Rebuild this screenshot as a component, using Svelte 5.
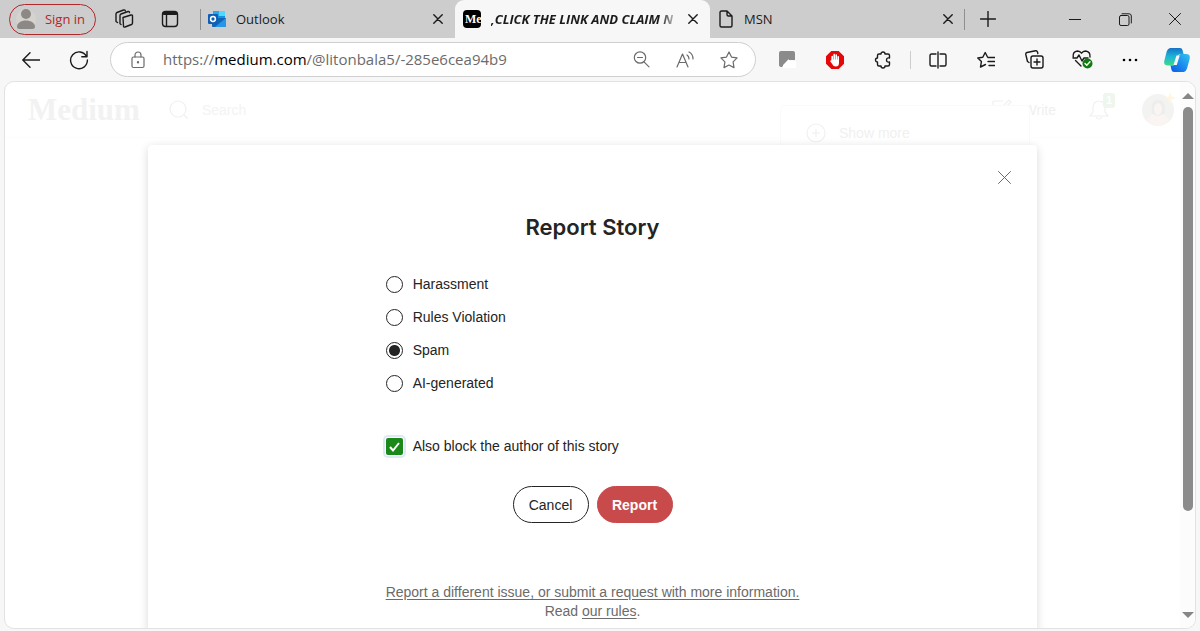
<script>
  let reason = 'Spam';
  let blockAuthor = true;
  let search = '';

  const reasons = ['Harassment', 'Rules Violation', 'Spam', 'AI-generated'];
</script>

<div class="browser">
  <header class="tabs">
    <button class="sign-in">
      <svg width="20" height="20" viewBox="0 0 20 20">
        <circle cx="10" cy="10" r="10" fill="#d6d2ce" />
        <circle cx="10" cy="5" r="5" fill="#8c8885" />
        <path d="M1 18c0-4 4-6.500 9-6.500s9 2.500 9 6.500c0 2-4 3-9 3s-9-1-9-3z" fill="#8c8885" />
      </svg>
      Sign in
    </button>
    <button class="tool" aria-label="Workspaces">
      <svg width="20" height="20" viewBox="0 0 20 20" class="line">
        <path d="M9 8.500l8-2.500q1.500-.4 1.500 1v7q0 1-1 1.500l-6.500 2.500q-1.500.5-1.500-1z" />
        <path d="M7 15.500l-1-.7V6.500q0-1 1-1.500l7-2.500q1.300-.3 1.500 1M3.500 13.500l-1.500-1V5q0-1 1-1.500L9.500 1q1.300-.4 1.800.8" />
      </svg>
    </button>
    <button class="tool" aria-label="Tab actions menu">
      <svg width="18" height="18" viewBox="0 0 18 18" class="line">
        <rect x="1.500" y="1.500" width="15" height="15" rx="3" />
        <path d="M3 3.500h12" stroke-width="3" />
        <path d="M5.500 5v11" />
      </svg>
    </button>

    <div class="tab first">
      <svg width="18" height="18" viewBox="0 0 18 18">
        <rect x="5" y="1" width="12" height="14" rx="1" fill="#1490df" />
        <rect x="11" y="1" width="6" height="5" fill="#50d9ff" />
        <rect x="5" y="1" width="6" height="5" fill="#28a8ea" />
        <path d="M4 8h14v8q0 1-1 1H5q-1 0-1-1z" fill="#1066b5" />
        <path d="M18 8v8q0 1-1 1H7z" fill="#2596e8" />
        <rect y="4" width="10" height="10" rx="1" fill="#0f5fb8" />
        <circle cx="5" cy="9" r="2.400" fill="none" stroke="#fff" stroke-width="1.500" />
      </svg>
      <span class="tab-title">Outlook</span>
      <button class="close" aria-label="Close Outlook tab">
        <svg width="10" height="10" viewBox="0 0 10 10" class="line"><path d="M.8.8l8.400 8.400M9.200.8L.8 9.200" /></svg>
      </button>
    </div>
    <div class="tab active">
      <span class="favicon">Me</span>
      <span class="tab-title promo">,CLICK THE LINK AND CLAIM N</span>
      <button class="close" aria-label="Close Medium tab">
        <svg width="10" height="10" viewBox="0 0 10 10" class="line"><path d="M.8.8l8.400 8.400M9.200.8L.8 9.200" /></svg>
      </button>
    </div>
    <div class="tab">
      <svg width="16" height="18" viewBox="0 0 16 18" class="line">
        <path d="M3.500 1H9l5 5v9.500q0 1.500-1.500 1.500h-9Q2 17 2 15.500v-13Q2 1 3.500 1zM9 1v3.500Q9 6 10.500 6H14" />
      </svg>
      <span class="tab-title">MSN</span>
      <button class="close" aria-label="Close MSN tab">
        <svg width="10" height="10" viewBox="0 0 10 10" class="line"><path d="M.8.8l8.400 8.400M9.200.8L.8 9.200" /></svg>
      </button>
    </div>
    <button class="tool new-tab" aria-label="New tab">
      <svg width="16" height="16" viewBox="0 0 16 16" class="line"><path d="M8 .5v15M.5 8h15" /></svg>
    </button>

    <div class="window-buttons">
      <button aria-label="Minimize">
        <svg width="12" height="12" viewBox="0 0 12 12" class="line thin"><path d="M0 6.500h12" /></svg>
      </button>
      <button aria-label="Restore">
        <svg width="13" height="13" viewBox="0 0 13 13" class="line thin">
          <rect x=".5" y="2.500" width="9.500" height="10" rx="1.500" />
          <path d="M3 .8h7q2.300 0 2.300 2.200v7" />
        </svg>
      </button>
      <button aria-label="Close window">
        <svg width="12" height="12" viewBox="0 0 12 12" class="line thin"><path d="M.5.5l11 11M11.500.5l-11 11" /></svg>
      </button>
    </div>
  </header>

  <nav class="toolbar">
    <button class="tool" aria-label="Back">
      <svg width="18" height="16" viewBox="0 0 18 16" class="line"><path d="M18 8H1M8 .8L.8 8 8 15.200" /></svg>
    </button>
    <button class="tool" aria-label="Refresh">
      <svg width="20" height="20" viewBox="0 0 20 20" class="line"><path d="M17.500 6.500A8.400 8.400 0 1 0 18.400 10M18 1.500v5.200h-5.200" /></svg>
    </button>

    <div class="address">
      <svg class="line grey" width="14" height="18" viewBox="0 0 14 18">
        <rect x="1" y="6" width="12" height="10.500" rx="1.500" />
        <path d="M4 6V4a3 3 0 0 1 6 0v2" />
        <circle cx="7" cy="11.300" r=".6" />
      </svg>
      <div class="url" role="textbox" aria-label="Address" contenteditable="true" tabindex="0">https://<b>medium.com</b>/@litonbala5/-285e6cea94b9</div>
      <button aria-label="Zoom out">
        <svg width="17" height="17" viewBox="0 0 17 17" class="line grey"><circle cx="7" cy="6.500" r="5.700" /><path d="M4.500 6.500h5M11 10.800l5 5" /></svg>
      </button>
      <button aria-label="Read aloud">
        <svg width="18" height="17" viewBox="0 0 18 17" class="line grey"><path d="M1 16L6.500 3 12 16M3 11.500h7M11 4q2 1.300 2 4M13 1q4 2 4 7" /></svg>
      </button>
      <button aria-label="Add to favorites">
        <svg width="18" height="18" viewBox="0 0 18 18" class="line grey"><path d="M9 1l2.500 5.100 5.600.8-4 4 .9 5.700L9 14l-5 2.600.9-5.700-4-4 5.600-.8z" /></svg>
      </button>
    </div>

    <button class="tool" aria-label="Media extension">
      <svg width="17" height="17" viewBox="0 0 17 17">
        <path d="M2 0h12q2 0 2 2v7h-7l-6 7H2q-2 0-2-2V2q0-2 2-2z" fill="#8b8b8b" />
        <path d="M10 8l-2.500 2.500L4 14v3h13v-7h-7z" fill="#fff" />
      </svg>
    </button>
    <button class="tool" aria-label="Ad blocker">
      <svg width="18" height="18" viewBox="0 0 18 18">
        <path d="M5.300 0h7.400L18 5.300v7.400L12.700 18H5.300L0 12.700V5.300z" fill="#e50808" />
        <path d="M6.200 10V5.500M8.200 9V3.500M10.200 9V4M12.200 10V5.800" stroke="#fff" stroke-width="1.600" stroke-linecap="round" />
        <path d="M5.400 8.500H13V12q0 3.500-3.300 3.500-2.500 0-3.500-2.500L4 10q.5-1 1.400-.3z" fill="#fff" />
      </svg>
    </button>
    <button class="tool" aria-label="Extensions">
      <svg width="18" height="18" viewBox="0 0 18 18" class="line">
        <path d="M7 3a2 2 0 0 1 4 0h3q1.500 0 1.500 1.500V7q-3-.5-3 2t3 2v2.500Q15.500 15 14 15h-3a2 2 0 0 1-4 0H5q-1.500 0-1.500-1.500V11a2 2 0 0 1 0-4V4.500Q3.500 3 5 3z" />
      </svg>
    </button>
    <span class="divider"></span>
    <button class="tool" aria-label="Split screen">
      <svg width="18" height="18" viewBox="0 0 18 18" class="line"><path d="M7 3H2.500Q1 3 1 4.500v9Q1 15 2.500 15H7M11 3h4.500Q17 3 17 4.500v9q0 1.500-1.500 1.500H11M9 1v16" /></svg>
    </button>
    <button class="tool" aria-label="Favorites">
      <svg width="18" height="18" viewBox="0 0 18 18" class="line"><path d="M10.500 6L8.200 1.500 5.800 6.300.8 7l3.600 3.600-.9 5.400 5-2.500M11 6.500h7M11 10.500h7M12 14.500h6" /></svg>
    </button>
    <button class="tool" aria-label="Collections">
      <svg width="19" height="19" viewBox="0 0 19 19" class="line">
        <rect x="6" y="6" width="12" height="12" rx="2" />
        <path d="M12 9v6M9 12h6M4 12.500l-1.500-1L.8 4.500Q.5 3 2 2.500l8.500-1.700q1.500-.3 2 1.200l.3 1.500" />
      </svg>
    </button>
    <button class="tool" aria-label="Browser essentials">
      <svg width="21" height="19" viewBox="0 0 21 19" class="line">
        <path d="M1.200 7Q.5 1.500 5.500 1q2.500 0 4 2.200Q11 1 13.500 1q5 .5 4.500 6M1 8h4l2-3 3 6 2-3h4M3.500 10.500L9 16" />
        <circle cx="15.500" cy="13.500" r="5" fill="#107c10" stroke="none" />
        <path d="M13 13.500l1.800 1.800 3.200-3.500" stroke="#fff" />
      </svg>
    </button>
    <button class="tool" aria-label="Settings and more">
      <svg width="16" height="4" viewBox="0 0 16 4"><circle cx="2" cy="2" r="1.300" /><circle cx="8" cy="2" r="1.300" /><circle cx="14" cy="2" r="1.300" /></svg>
    </button>
    <button class="tool copilot" aria-label="Copilot">
      <svg width="26" height="24" viewBox="0 0 26 24">
        <defs>
          <linearGradient id="teal" x1="0" y1="0" x2="0" y2="1"><stop offset="0" stop-color="#1573c8" /><stop offset=".5" stop-color="#1db5d8" /><stop offset="1" stop-color="#3ddc84" /></linearGradient>
          <linearGradient id="blue" x1="1" y1="0" x2="0" y2="1"><stop offset="0" stop-color="#34c4ee" /><stop offset=".6" stop-color="#1882ee" /><stop offset="1" stop-color="#0a5be0" /></linearGradient>
        </defs>
        <path d="M6 0h10q2 0 2.500 2l1 4h-3q-2 0-2.600 2l-2.500 7q-.9 2.500-3.400 2.500H4q-5 0-3.500-5.500l2.200-8.500Q3.500 .5 6 0z" fill="url(#teal)" />
        <path d="M20 24H10q-2 0-2.500-2l-1-4.500h2q2.500 0 3.400-2.500l2.500-7q.7-2 2.700-2H22q5 0 3.500 5.500l-2.500 9Q22 23.500 20 24z" fill="url(#blue)" />
        <path d="M12.500 7.500h3.200l-2.900 9.500H9.500z" fill="#f7f7f7" />
      </svg>
    </button>
  </nav>

  <main class="viewport">
    <div class="page">
      <div class="site-header">
        <a class="logo" href="/">Medium</a>
        <label class="search">
          <svg width="20" height="20" viewBox="0 0 20 20" class="faint"><circle cx="9" cy="9" r="8" /><path d="M15 15l4 4" /></svg>
          <input type="text" placeholder="Search" aria-label="Search" bind:value={search} />
        </label>
        <a class="write" href="/new-story">
          <svg width="22" height="22" viewBox="0 0 22 22" class="faint"><path d="M12 2H3Q2 2 2 3v15q0 1 1 1h15q1 0 1-1v-8M8 13l1-3 9-9 2 2-9 9z" /></svg>
          Write
        </a>
        <button class="bell" aria-label="Notifications">
          <svg width="20" height="22" viewBox="0 0 20 22" class="faint"><path d="M4 8a6 6 0 0 1 12 0v5l3 4H1l3-4zM7 18q3 4 6 0" /></svg>
          <span class="badge">1</span>
        </button>
        <button class="avatar" aria-label="Profile">
          <svg width="32" height="32" viewBox="0 0 32 32">
            <circle cx="16" cy="16" r="16" fill="#f3f3f2" />
            <path d="M5 26q3-6 8-6l3 3 3-3q5 0 8 6-4 6-11 6T5 26z" fill="#faf5f2" />
            <path d="M10 19q-2-13 6-13t7 13q-7 5-13 0z" fill="#ededed" />
            <ellipse cx="16" cy="15" rx="4" ry="6" fill="#faf5f2" />
          </svg>
          <svg class="spark" width="12" height="12" viewBox="0 0 12 12"><path d="M6 0l1.500 4.500L12 6 7.500 7.500 6 12 4.500 7.500 0 6l4.500-1.500z" fill="#fff6e0" /></svg>
        </button>
        <div class="menu">
          <button>
            <svg width="20" height="20" viewBox="0 0 20 20" class="faint"><circle cx="10" cy="10" r="9" /><path d="M10 6v8M6 10h8" /></svg>
            Show more
          </button>
        </div>
      </div>

      <div class="overlay">
        <div class="dialog" role="dialog" aria-labelledby="report-title">
          <button class="dismiss" aria-label="Close dialog">
            <svg width="13" height="13" viewBox="0 0 13 13" class="line"><path d="M.5.5l12 12M12.500.5l-12 12" /></svg>
          </button>
          <h2 id="report-title">Report Story</h2>
          <form on:submit|preventDefault>
            <div class="reasons" role="radiogroup" aria-labelledby="report-title">
              {#each reasons as item}
                <label>
                  <input type="radio" name="reason" value={item} bind:group={reason} />
                  <span>{item}</span>
                </label>
              {/each}
            </div>
            <label class="block">
              <input type="checkbox" bind:checked={blockAuthor} />
              <svg class="tick" width="17" height="17" viewBox="0 0 17 17"><path d="M4 9l3 3.500L13 5" /></svg>
              <span>Also block the author of this story</span>
            </label>
            <div class="actions">
              <button type="button">Cancel</button>
              <button type="submit" class="danger">Report</button>
            </div>
            <p>
              <a href="/help">Report a different issue, or submit a request with more information.</a><br />
              Read <a href="/rules">our rules</a>.
            </p>
          </form>
        </div>
      </div>
    </div>

    <div class="scrollbar" aria-hidden="true">
      <svg width="12" height="6" viewBox="0 0 12 6"><path d="M6 0l6 6H0z" /></svg>
      <div class="track"><div class="thumb"></div></div>
      <svg width="12" height="6" viewBox="0 0 12 6"><path d="M6 6l6-6H0z" /></svg>
    </div>
  </main>
</div>

<style>
  :global(body) {
    background: #f7f7f7;
  }

  .browser {
    display: flex;
    flex-direction: column;
    height: 100vh;
    overflow: hidden;
    font-family: "Open Sans", "Noto Sans", sans-serif;
    font-size: 13px;
    color: #1b1b1b;
  }

  button {
    display: flex;
    align-items: center;
    justify-content: center;
    flex: none;
    padding: 0;
    border: none;
    background: none;
    font: inherit;
    color: inherit;
    cursor: pointer;
  }

  svg {
    flex: none;
    display: block;
  }

  .line {
    fill: none;
    stroke: #1b1b1b;
    stroke-width: 1.4;
    stroke-linecap: round;
    stroke-linejoin: round;
  }

  .thin {
    stroke-width: 1;
  }

  .grey {
    stroke: #6b6b6b;
    stroke-width: 1.2;
  }

  .faint {
    fill: none;
    stroke: #f0f0f0;
    stroke-width: 1.2;
  }

  .tabs {
    display: flex;
    align-items: center;
    flex: none;
    height: 38px;
    padding-left: 9px;
    background: #cdcdcd;
  }

  .sign-in {
    gap: 9px;
    width: 87px;
    height: 31px;
    padding-right: 4px;
    border: 1px solid #b3262b;
    border-radius: 16px;
    box-sizing: border-box;
    color: #b3262b;
  }

  .tabs .tool {
    width: 46px;
    height: 38px;
  }

  .sign-in + .tool {
    margin-left: 5px;
  }

  .tab {
    display: flex;
    align-items: center;
    flex: 0 1 255px;
    min-width: 0;
    height: 38px;
    padding: 0 11px 0 8px;
    box-sizing: border-box;
    position: relative;
  }

  .tab.first {
    margin-left: 7px;
  }

  .tab.first::before,
  .tab:not(.first):not(.active)::after {
    content: '';
    position: absolute;
    top: 9px;
    left: 0;
    width: 1px;
    height: 21px;
    background: #8f8f8f;
  }

  .tab:not(.first):not(.active)::after {
    left: auto;
    right: 0;
  }

  .tab.active {
    border-radius: 9px 9px 0 0;
    background: #f7f7f7;
  }

  .tab-title {
    flex: 1;
    min-width: 0;
    margin-left: 10px;
    overflow: hidden;
    white-space: nowrap;
  }

  .promo {
    font-weight: 700;
    font-style: italic;
    mask-image: linear-gradient(to right, #000 90%, transparent);
  }

  .close {
    width: 12px;
    height: 20px;
    margin-left: 8px;
  }

  .favicon {
    width: 18px;
    height: 18px;
    padding-left: 2px;
    box-sizing: border-box;
    overflow: hidden;
    border-radius: 4px;
    background: #000;
    color: #fff;
    font: 700 12px/18px "Liberation Serif", serif;
  }

  .window-buttons {
    display: flex;
    margin-left: auto;
  }

  .window-buttons button {
    width: 50px;
    height: 38px;
  }

  .toolbar {
    display: flex;
    align-items: center;
    flex: none;
    height: 43px;
    padding-left: 7px;
  }

  .toolbar .tool {
    width: 48px;
    height: 40px;
  }

  .toolbar .copilot {
    width: 46px;
  }

  .address {
    display: flex;
    align-items: center;
    flex: 1;
    min-width: 0;
    height: 35px;
    margin: 0 7px;
    padding: 0 4px 0 20px;
    box-sizing: border-box;
    border: 1px solid #cfcfcf;
    border-radius: 18px;
    background: #fff;
  }

  .address button {
    width: 44px;
    height: 32px;
  }

  .url {
    flex: 1;
    min-width: 0;
    margin-left: 18px;
    padding-bottom: 2px;
    overflow: hidden;
    white-space: nowrap;
    outline: none;
    font-size: 15px;
    color: #6b6b6b;
  }

  .url b {
    font-weight: 400;
    color: #000;
  }

  .divider {
    width: 1px;
    height: 18px;
    margin: 0 3px;
    background: #cdcdcd;
  }

  .viewport {
    display: flex;
    flex: 1;
    min-height: 0;
    margin: 0 4px 2px;
    overflow: hidden;
    border: 1px solid #e2e2e2;
    border-radius: 10px;
    background: #fff;
    font-family: "Liberation Sans", Arial, sans-serif;
    font-size: 14px;
  }

  .page {
    flex: 1;
    min-width: 0;
    position: relative;
  }

  .site-header {
    display: flex;
    align-items: center;
    height: 56px;
    padding: 0 6px 0 23px;
    box-sizing: border-box;
    border-bottom: 1px solid #fcfcfc;
    color: #f0f0f0;
  }

  .logo {
    font: 700 31px/40px "Liberation Serif", serif;
    color: #f2f2f2;
    text-decoration: none;
  }

  .search {
    display: flex;
    align-items: center;
    gap: 13px;
    margin-left: 29px;
  }

  .search input {
    width: 150px;
    padding: 0;
    border: none;
    outline: none;
    background: none;
    font: inherit;
  }

  .search input::placeholder {
    color: #f3f3f3;
  }

  .write {
    display: flex;
    align-items: center;
    gap: 11px;
    margin-left: auto;
    color: inherit;
    text-decoration: none;
  }

  .bell {
    position: relative;
    margin: 0 33px;
  }

  .badge {
    position: absolute;
    top: -6px;
    right: -6px;
    width: 12px;
    border-radius: 3px;
    background: #eef6ee;
    color: #fff;
    font-size: 11px;
    font-weight: 700;
    line-height: 15px;
  }

  .avatar {
    position: relative;
  }

  .spark {
    position: absolute;
    top: -2px;
    right: -2px;
  }

  .menu {
    position: absolute;
    top: 23px;
    right: 150px;
    width: 250px;
    height: 60px;
    padding: 17px 25px;
    box-sizing: border-box;
    border: 1px solid #fafafa;
    border-radius: 4px;
    background: #fff;
  }

  .menu button {
    gap: 13px;
  }

  .overlay {
    position: absolute;
    inset: 0;
    display: flex;
    justify-content: center;
    align-items: flex-start;
    padding: 63px 143px 0;
    overflow: hidden;
  }

  .dialog {
    flex: 1;
    max-width: 1000px;
    padding: 26px 26px 40px;
    border-radius: 4px;
    background: #fff;
    box-shadow: 0 2px 10px rgba(0, 0, 0, 0.15);
  }

  .dismiss {
    margin-left: auto;
  }

  .dismiss .line {
    stroke: #6b6b6b;
    stroke-width: 1;
  }

  h2 {
    margin: 29px 0 0;
    text-align: center;
    font: 600 22px/28px Inter, sans-serif;
    color: #242424;
  }

  form {
    width: fit-content;
    margin: 27px auto 0;
    color: #242424;
  }

  .reasons {
    display: flex;
    flex-direction: column;
  }

  label {
    display: flex;
    align-items: center;
  }

  .reasons label {
    height: 33px;
    gap: 10px;
  }

  .reasons span {
    padding-bottom: 2px;
  }

  input[type='radio'],
  input[type='checkbox'] {
    appearance: none;
    flex: none;
    width: 17px;
    height: 17px;
    margin: 0;
    border: 1px solid #242424;
    border-radius: 50%;
  }

  input[type='radio']:checked {
    background: radial-gradient(circle, #242424 5px, #fff 6px);
  }

  .block {
    position: relative;
    gap: 10px;
    height: 20px;
    margin-top: 36px;
  }

  input[type='checkbox'] {
    border: none;
    border-radius: 2px;
    background: #fff;
    box-shadow: 0 0 0 1px #fff, 0 0 0 3px #dfe8f5;
  }

  input[type='checkbox']:checked {
    background: #1a8917;
  }

  .tick {
    position: absolute;
    left: 0;
    fill: none;
    stroke: #fff;
    stroke-width: 2;
    pointer-events: none;
  }

  .actions {
    display: flex;
    justify-content: center;
    gap: 8px;
    margin-top: 30px;
  }

  .actions button {
    width: 76px;
    height: 37px;
    border: 1px solid #242424;
    border-radius: 19px;
  }

  .actions .danger {
    border-color: #c94a4a;
    background: #c94a4a;
    color: #fff;
    font-weight: 700;
  }

  p {
    margin: 60px 0 0;
    text-align: center;
    line-height: 19px;
    color: #6b6b6b;
  }

  p a {
    color: inherit;
    text-underline-offset: 2px;
  }

  .scrollbar {
    display: flex;
    flex-direction: column;
    align-items: center;
    flex: none;
    width: 15px;
    padding: 11px 0 10px;
    box-sizing: border-box;
    background: #fcfcfc;
    fill: #868686;
  }

  .track {
    flex: 1;
    width: 10px;
    margin: 8px 0 0;
  }

  .thumb {
    height: 80%;
    border-radius: 5px;
    background: #8b8b8b;
  }
</style>
